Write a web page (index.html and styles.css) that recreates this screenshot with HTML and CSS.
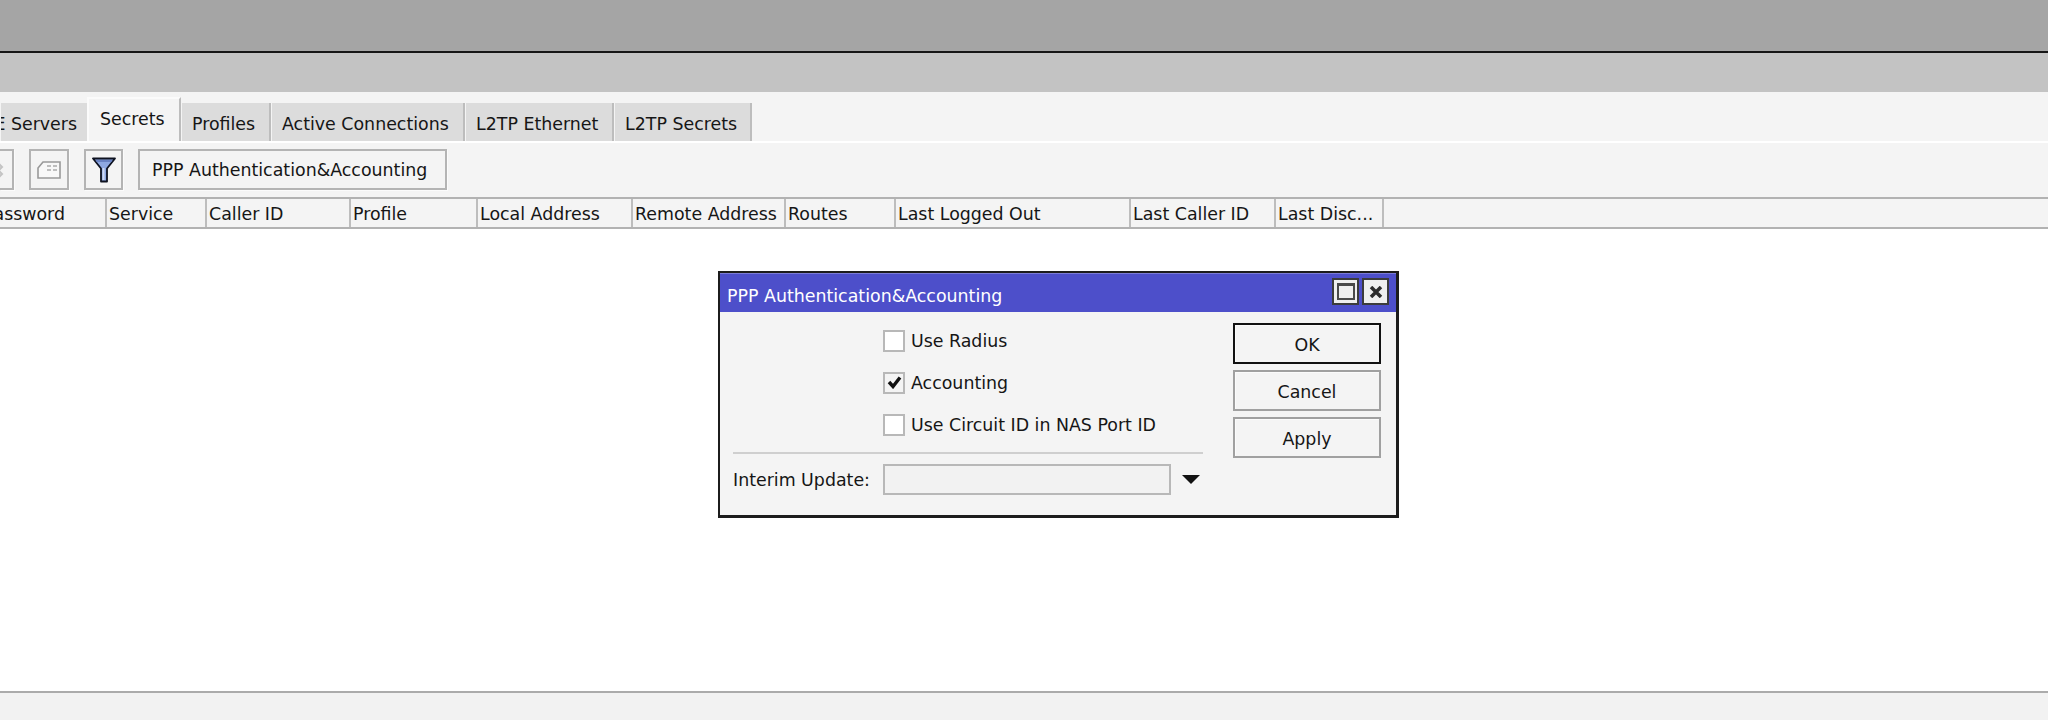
FILE: index.html
```html
<!DOCTYPE html>
<html lang="en">
<head>
<meta charset="utf-8">
<title>PPP</title>
<link rel="stylesheet" href="styles.css">
</head>
<body>
<div class="page">
  <div class="topbar"></div>
  <div class="subbar"></div>
  <div class="tabs">
    <div class="tab clipped w-87"><span>PPPoE Servers</span></div>
    <div class="tab active w-94">Secrets</div>
    <div class="tab w-90">Profiles</div>
    <div class="tab w-194">Active Connections</div>
    <div class="tab w-149">L2TP Ethernet</div>
    <div class="tab w-138">L2TP Secrets</div>
  </div>
  <div class="toolbar">
    <div class="tbtn w-14 cut">
      <svg class="ic" width="10" height="24" viewBox="0 0 10 24"><path d="M-3 4l5 5-5 5M-3 11l5 5-5 5" fill="none" stroke="#c4c4c4" stroke-width="2"/></svg>
    </div>
    <div class="tbtn w-40">
      <svg width="24" height="18" viewBox="0 0 24 18"><path d="M1 17V7L6 1H23V17Z" fill="#f8f8f8" stroke="#999" stroke-width="1.600"/><path d="M10 5h4M16 5h4M10 9h4M16 9h4" stroke="#aaa" stroke-width="1.400"/></svg>
    </div>
    <div class="tbtn w-39">
      <svg width="24" height="26" viewBox="0 0 24 26"><path d="M1 1.500H23L15 11.500V24.500H9V11.500Z" fill="#8ea8e2" stroke="#0e1220" stroke-width="1.800" stroke-linejoin="round"/><path d="M4 4H20" stroke="#5d76b8" stroke-width="1.500"/><path d="M11.500 11v12" stroke="#cfdbf5" stroke-width="2"/></svg>
    </div>
    <div class="tbtn wide">PPP Authentication&amp;Accounting</div>
  </div>
  <div class="header">
    <div class="col clip-col w-106"><span>Password</span></div>
    <div class="col w-100">Service</div>
    <div class="col w-144">Caller ID</div>
    <div class="col w-127">Profile</div>
    <div class="col w-155">Local Address</div>
    <div class="col w-153">Remote Address</div>
    <div class="col w-110">Routes</div>
    <div class="col w-235">Last Logged Out</div>
    <div class="col w-145">Last Caller ID</div>
    <div class="col w-108">Last Disc...</div>
  </div>
  <div class="list"></div>
  <div class="status"></div>

  <div class="dialog">
    <div class="titlebar">
      <span class="title">PPP Authentication&amp;Accounting</span>
      <div class="winbtns">
        <div class="winbtn"><span class="max-glyph"></span></div>
        <div class="winbtn">
          <svg width="14" height="12" viewBox="0 0 14 12"><path d="M2 1l10 10M12 1L2 11" stroke="#2c2c2c" stroke-width="3.500"/></svg>
        </div>
      </div>
    </div>
    <div class="dbody">
      <div class="form">
        <div class="checks">
          <label class="check"><span class="box"></span>Use Radius</label>
          <label class="check"><span class="box on">
            <svg width="15" height="13" viewBox="0 0 15 13"><path d="M2 6l4 4.500 7-9" fill="none" stroke="#111" stroke-width="3.400"/></svg>
          </span>Accounting</label>
          <label class="check"><span class="box"></span>Use Circuit ID in NAS Port ID</label>
        </div>
        <div class="sep"></div>
        <div class="field">
          <span class="flabel">Interim Update:</span>
          <div class="input"></div>
          <span class="arrow"></span>
        </div>
      </div>
      <div class="actions">
        <div class="dbtn default">OK</div>
        <div class="dbtn">Cancel</div>
        <div class="dbtn">Apply</div>
      </div>
    </div>
  </div>
</div>
</body>
</html>
```

FILE: styles.css
```css
* { box-sizing: border-box; }
html, body { margin: 0; padding: 0; }
body { width: 2048px; height: 720px; overflow: hidden; background: #fff; }
.page {
  position: relative;
  width: 2048px;
  height: 720px;
  display: flex;
  flex-direction: column;
  font-family: "DejaVu Sans", sans-serif;
  font-size: 17.4px;
  color: #161616;
  background: #f4f4f4;
  overflow: hidden;
}
.topbar { height: 53px; flex: none; background: #a5a5a5; border-bottom: 2px solid #161616; }
.subbar { height: 39px; flex: none; background: #c3c3c3; }

.tabs {
  height: 51px;
  flex: none;
  display: flex;
  align-items: flex-end;
  padding-top: 5px;
  background: #f4f4f4;
  border-bottom: 2px solid #fff;
}
.tab {
  height: 38px;
  flex: none;
  display: flex;
  align-items: center;
  background: #dcdcdc;
  border-right: 2px solid #bdbdbd;
  border-left: 1px solid #f4f4f4;
  padding: 4px 0 0 10px;
  white-space: nowrap;
}
.tab.clipped { justify-content: flex-end; padding-left: 0; padding-right: 10px; border-right: 0; overflow: hidden; }
.tab.active { height: 44px; background: #f4f4f4; border-top: 2px solid #fbfbfb; border-left: 2px solid #fbfbfb; padding: 0 0 2px 11px; }

.toolbar {
  height: 54px;
  flex: none;
  display: flex;
  align-items: flex-start;
  gap: 15px;
  padding-top: 6px;
}
.tbtn {
  height: 41px;
  flex: none;
  display: flex;
  align-items: center;
  justify-content: center;
  border: 2px solid #b4b4b4;
  box-shadow: 1px 1px 0 #fbfbfb;
  white-space: nowrap;
}
.tbtn.cut { border-left: 0; justify-content: flex-start; }
.tbtn.wide { width: 309px; justify-content: flex-start; padding-left: 12px; }
.w-14 { width: 14px; }
.w-40 { width: 40px; }
.w-39 { width: 39px; }

.header {
  height: 32px;
  flex: none;
  display: flex;
  border-top: 2px solid #b2b2b2;
  border-bottom: 2px solid #b2b2b2;
}
.col {
  height: 100%;
  flex: none;
  display: flex;
  align-items: center;
  padding-left: 2px;
  padding-top: 2px;
  border-right: 2px solid #bdbdbd;
  white-space: nowrap;
  overflow: hidden;
}
.col.clip-col { justify-content: flex-end; padding-left: 0; padding-right: 40px; }
.w-87 { width: 87px; }
.w-94 { width: 94px; }
.w-90 { width: 90px; }
.w-194 { width: 194px; }
.w-149 { width: 149px; }
.w-138 { width: 138px; }
.w-106 { width: 107px; }
.w-100 { width: 100px; }
.w-144 { width: 144px; }
.w-127 { width: 127px; }
.w-155 { width: 155px; }
.w-153 { width: 153px; }
.w-110 { width: 110px; }
.w-235 { width: 235px; }
.w-145 { width: 145px; }
.w-108 { width: 108px; }

.list { flex: 1; background: #fff; }
.status { height: 29px; flex: none; background: #f2f2f2; border-top: 2px solid #ababab; }

.dialog {
  position: absolute;
  left: 718px;
  top: 271px;
  width: 681px;
  height: 247px;
  display: flex;
  flex-direction: column;
  background: #f4f4f4;
  border: 2px solid #1c1c1c;
  border-right-width: 3px;
  border-bottom-width: 3px;
}
.titlebar {
  height: 39px;
  flex: none;
  display: flex;
  align-items: center;
  justify-content: space-between;
  padding: 0 7px 0 7px;
  background: #4d4fca;
  border-top: 1px solid #7b7bd8;
  color: #fff;
}
.title { padding-top: 5px; }
.winbtns { display: flex; gap: 3px; margin-top: -3px; }
.winbtn {
  width: 27px;
  height: 27px;
  display: flex;
  align-items: center;
  justify-content: center;
  background: #efefef;
  border: 2px solid #3c3c3c;
}
.max-glyph { display: block; width: 18px; height: 17px; border: 2px solid #4a4a4a; border-top-width: 3px; }
.dbody { flex: 1; display: flex; }
.form { width: 499px; flex: none; padding: 18px 0 0 13px; display: flex; flex-direction: column; }
.checks { display: flex; flex-direction: column; gap: 21px; padding-left: 150px; }
.check { height: 21px; display: flex; align-items: center; gap: 6px; white-space: nowrap; }
.box {
  width: 22px;
  height: 22px;
  flex: none;
  display: flex;
  align-items: center;
  justify-content: center;
  background: #fff;
  border: 2px solid #b8b8b8;
}
.box.on { background: #f4f4f4; }
.sep { width: 470px; height: 2px; margin-top: 17px; background: #cfcfcf; flex: none; }
.field { display: flex; align-items: center; margin-top: 10px; }
.flabel { width: 150px; flex: none; white-space: nowrap; }
.input { width: 288px; height: 31px; flex: none; border: 2px solid #b8b8b8; background: #f2f2f2; }
.arrow { margin-left: 11px; width: 0; height: 0; border-left: 9px solid transparent; border-right: 9px solid transparent; border-top: 9px solid #111; }
.actions { display: flex; flex-direction: column; gap: 6px; padding: 11px 0 0 14px; }
.dbtn {
  width: 148px;
  height: 41px;
  display: flex;
  align-items: center;
  justify-content: center;
  padding-top: 2px;
  border: 2px solid #a0a0a0;
  box-shadow: inset 1px 1px 0 #fbfbfb;
}
.dbtn.default { border-color: #111; }
```
